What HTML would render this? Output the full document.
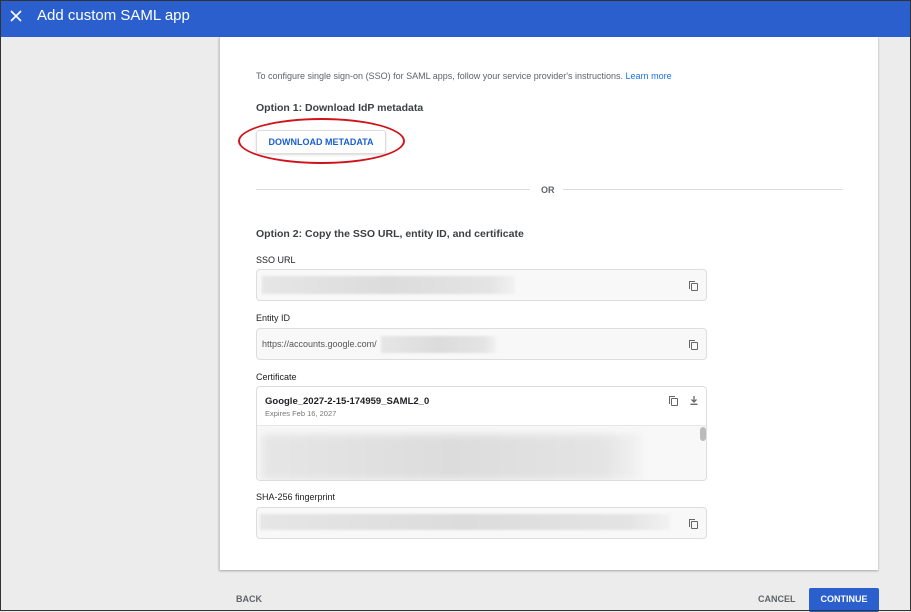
<!DOCTYPE html>
<html><head><style>
*{box-sizing:border-box;margin:0;padding:0}
body{width:911px;height:611px;overflow:hidden;background:#ececec;font-family:"Liberation Sans",Arial,sans-serif;position:relative;color:#202124}
.frame{position:absolute;left:0;top:0;width:911px;height:611px;border:1px solid #333;z-index:10;pointer-events:none}
.hdr{position:absolute;left:0;top:0;width:911px;height:37px;background:#2b5fce;color:#fff}
.hdr .t{position:absolute;left:37px;top:7px;font-size:15px}
.card{position:absolute;left:219px;top:37px;width:659px;height:533px;background:#fff;border-left:1px solid #ccc;box-shadow:0 1px 2px rgba(0,0,0,.3)}
.a{position:absolute;white-space:nowrap}
.sm{font-size:9px;color:#5f6368}
.h{font-size:10.5px;font-weight:bold;color:#3c4043}
.lbl{font-size:9px;color:#202124}
.box{position:absolute;left:256px;width:451px;background:#f8f8f8;border:1px solid #ddd;border-radius:4px;overflow:hidden}
.blur{position:absolute;background:linear-gradient(90deg,#e6e6e6,#dcdcdc 50%,#e4e4e4 90%,#f2f2f2);filter:blur(1px)}
.cp{position:absolute;width:7px;height:8px;border:1.2px solid #666;border-radius:1px}
.cp:before{content:"";position:absolute;left:-3px;top:-3px;width:5px;height:7px;border-left:1.2px solid #666;border-top:1.2px solid #666}
</style></head><body>
<div class="hdr"><svg class="a" style="left:10px;top:10px" width="12" height="12" viewBox="0 0 12 12"><path d="M1 1L11 11M11 1L1 11" stroke="#fff" stroke-width="1.6"/></svg><div class="t">Add custom SAML app</div></div>
<div class="card"></div>
<div class="a sm" style="left:256px;top:71px">To configure single sign-on (SSO) for SAML apps, follow your service provider's instructions. <span style="color:#1a73e8">Learn more</span></div>
<div class="a h" style="left:256px;top:102px">Option 1: Download IdP metadata</div>
<div class="a" style="left:256px;top:130px;width:130px;height:24px;border:1px solid #ddd;border-radius:3px;box-shadow:0 1px 2px rgba(0,0,0,.15);font-size:9px;font-weight:bold;color:#1a5fd0;text-align:center;line-height:22px">DOWNLOAD METADATA</div>
<div class="a" style="left:238px;top:118px;width:167px;height:46px;border:2.5px solid #d0121b;border-radius:50%"></div>
<div class="a" style="left:256px;top:189px;width:274px;height:1px;background:#ddd"></div>
<div class="a" style="left:563px;top:189px;width:280px;height:1px;background:#ddd"></div>
<div class="a sm" style="left:541px;top:185px;font-weight:bold;color:#5f6368">OR</div>
<div class="a h" style="left:256px;top:228px">Option 2: Copy the SSO URL, entity ID, and certificate</div>
<div class="a lbl" style="left:256px;top:255px">SSO URL</div>
<div class="box" style="top:269px;height:32px"><div class="blur" style="left:5px;top:6px;width:253px;height:18px"></div><div class="cp" style="left:434px;top:13px"></div></div>
<div class="a lbl" style="left:256px;top:313px">Entity ID</div>
<div class="box" style="top:328px;height:32px"><div class="a sm" style="left:5px;top:10px;color:#555">https://accounts.google.com/</div><div class="blur" style="left:124px;top:7px;width:115px;height:17px"></div><div class="cp" style="left:434px;top:13px"></div></div>
<div class="a lbl" style="left:256px;top:372px">Certificate</div>
<div class="box" style="top:386px;height:95px;background:#fff">
<div class="a" style="left:8px;top:9px;font-size:9.5px;font-weight:bold;color:#202124">Google_2027-2-15-174959_SAML2_0</div>
<div class="a" style="left:8px;top:22px;font-size:7.5px;color:#777">Expires Feb 16, 2027</div>
<div class="cp" style="left:414px;top:11px"></div>
<svg class="a" style="left:433px;top:9px" width="8" height="9" viewBox="0 0 8 9"><path d="M4 0V6M1.5 3.5L4 6L6.5 3.5M0.5 8.3H7.5" stroke="#666" stroke-width="1.3" fill="none"/></svg>
<div class="a" style="left:0;top:38px;width:449px;height:56px;background:#f8f8f8;border-top:1px solid #e6e6e6;overflow:hidden"><div class="blur" style="left:4px;top:8px;width:380px;height:46px;filter:blur(4px)"></div><div class="a" style="left:443px;top:1px;width:6px;height:14px;background:#bbb;border-radius:3px"></div></div>
</div>
<div class="a lbl" style="left:256px;top:492px">SHA-256 fingerprint</div>
<div class="box" style="top:507px;height:32px"><div class="blur" style="left:3px;top:6px;width:410px;height:16px"></div><div class="cp" style="left:434px;top:13px"></div></div>
<div class="a" style="left:236px;top:594px;font-size:9px;font-weight:bold;color:#5f6368">BACK</div>
<div class="a" style="left:758px;top:594px;font-size:9px;font-weight:bold;color:#5f6368">CANCEL</div>
<div class="a" style="left:809px;top:588px;width:70px;height:24px;background:#2b5fce;border-radius:2px;color:#fff;font-size:9px;font-weight:bold;text-align:center;line-height:22px">CONTINUE</div>
<div class="frame"></div>
</body></html>
